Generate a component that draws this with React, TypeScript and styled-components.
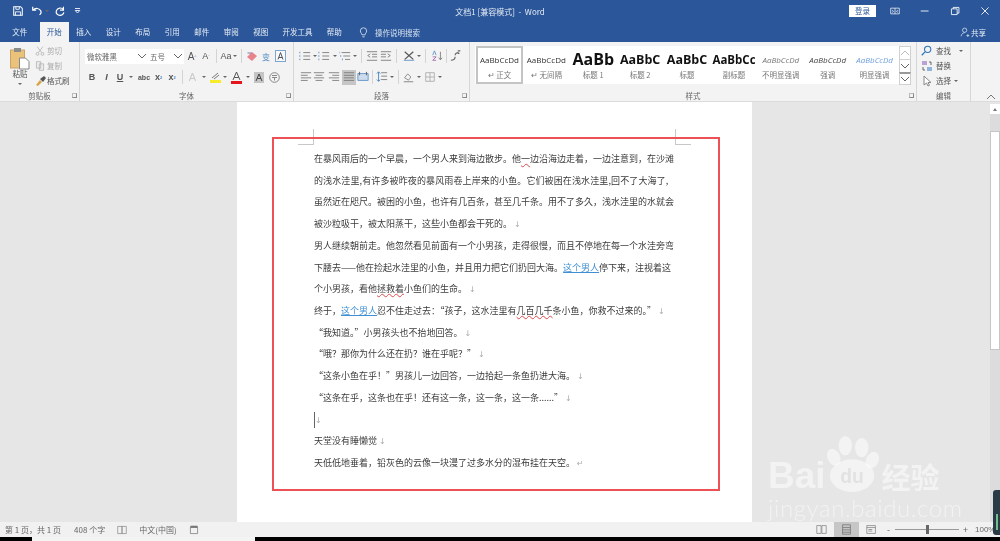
import React from "react";
import styled, { createGlobalStyle } from "styled-components";

const GlobalStyle = createGlobalStyle`
  html, body { margin: 0; padding: 0; background: #000; }
  * { box-sizing: border-box; }
`;

const CJK = `"Noto Sans CJK SC", "Noto Sans", sans-serif`;
const BLUE = "#2b579a";

const Window = styled.div`
  width: 1000px;
  height: 541px;
  overflow: hidden;
  display: flex;
  flex-direction: column;
  font-family: ${CJK};
  background: #f3f3f3;
  filter: blur(0.35px);
`;

const TitleBar = styled.div`
  height: 22px;
  background: ${BLUE};
  display: grid;
  grid-template-columns: 1fr auto 1fr;
  align-items: center;
  color: #fff;
`;

const QuickAccess = styled.div`
  display: flex;
  align-items: center;
  padding-left: 11px;
`;

const DocTitle = styled.div`
  font-size: 8px;
  color: #e3e9f3;
  white-space: pre;
`;

const WindowControls = styled.div`
  display: flex;
  align-items: center;
  justify-content: flex-end;
`;

const LoginButton = styled.div`
  width: 27px;
  height: 12px;
  margin-right: 4px;
  background: #fff;
  color: ${BLUE};
  font-size: 7.5px;
  line-height: 12px;
  text-align: center;
`;

const ControlCell = styled.div`
  width: 30px;
  display: flex;
  justify-content: center;
`;

const TabBar = styled.div`
  height: 20px;
  background: ${BLUE};
  display: flex;
  align-items: flex-end;
  padding-left: 5px;
`;

const Tab = styled.div<{ $active?: boolean; $gap?: number }>`
  height: 20px;
  min-width: 29.5px;
  padding: 0 7px;
  margin-right: ${(p) => p.$gap ?? 0}px;
  font-size: 7.5px;
  line-height: 19px;
  text-align: center;
  white-space: nowrap;
  background: ${(p) => (p.$active ? "#f3f3f3" : "transparent")};
  color: ${(p) => (p.$active ? BLUE : "#e6ebf4")};
`;

const SearchHint = styled.div`
  display: flex;
  align-items: center;
  gap: 6px;
  margin-left: 9px;
  height: 20px;
  font-size: 7.5px;
  color: #d7e0ee;
`;

const ShareLink = styled.div`
  margin-left: auto;
  margin-right: 14px;
  height: 20px;
  display: flex;
  align-items: center;
  gap: 1px;
  font-size: 7.5px;
  color: #e6ebf4;
`;

const Ribbon = styled.div`
  height: 60px;
  background: #f3f3f3;
  display: flex;
  border-bottom: 1px solid #dcdcdc;
`;

const Group = styled.div<{ $w: number }>`
  width: ${(p) => p.$w}px;
  height: 59px;
  display: flex;
  flex-direction: column;
  border-right: 1px solid #d6d6d6;
`;

const GroupBody = styled.div<{ $pad?: number }>`
  flex: 1 1 0;
  min-height: 0;
  display: flex;
  flex-direction: column;
  gap: 5px;
  padding: 6px 0 0 ${(p) => p.$pad ?? 5}px;
`;

const GroupFooter = styled.div`
  height: 11px;
  flex: none;
  display: grid;
  grid-template-columns: 1fr auto 1fr;
  align-items: center;
  font-size: 7.5px;
  line-height: 11px;
  color: #666;
`;

const Launcher = styled.div`
  justify-self: end;
  margin-right: 2px;
  width: 5px;
  height: 5px;
  border-right: 1px solid #888;
  border-bottom: 1px solid #888;
  border-left: 1px solid #bbb;
  border-top: 1px solid #bbb;
`;

const ToolRow = styled.div`
  display: flex;
  align-items: center;
  height: 16px;
`;

const Tool = styled.div<{ $w?: number; $on?: boolean }>`
  width: ${(p) => p.$w ?? 14}px;
  height: 15px;
  flex: none;
  display: flex;
  align-items: center;
  justify-content: center;
  font-size: 8px;
  color: #555;
  background: ${(p) => (p.$on ? "#c6c6c6" : "transparent")};
`;

const LetterTool = styled(Tool)<{ $b?: boolean; $i?: boolean; $u?: boolean; $size?: number; $color?: string }>`
  font-family: "Liberation Sans", sans-serif;
  font-size: ${(p) => p.$size ?? 9}px;
  font-weight: ${(p) => (p.$b ? 700 : 400)};
  font-style: ${(p) => (p.$i ? "italic" : "normal")};
  text-decoration: ${(p) => (p.$u ? "underline" : "none")};
  color: ${(p) => p.$color ?? "#555"};
`;

const Sub = styled.sub`
  font-size: 4px;
  color: #4a86c8;
`;

const Sup = styled.sup`
  font-size: 4px;
  color: #4a86c8;
`;

const Caret = styled.div<{ $w?: number }>`
  width: ${(p) => p.$w ?? 7}px;
  flex: none;
  display: flex;
  justify-content: center;
  &::before {
    content: "";
    border-left: 2px solid transparent;
    border-right: 2px solid transparent;
    border-top: 2px solid #666;
  }
`;

const Sep = styled.div<{ $m?: number }>`
  width: 1px;
  height: 14px;
  flex: none;
  margin: 0 ${(p) => p.$m ?? 3}px;
  background: #d4d4d4;
`;

const SelectBox = styled.div<{ $w: number }>`
  width: ${(p) => p.$w}px;
  height: 15px;
  flex: none;
  background: #fff;
  display: flex;
  align-items: center;
  justify-content: space-between;
  padding: 0 1px 0 2px;
  font-size: 7.5px;
  color: #666;
`;

const ClipboardBody = styled.div`
  flex: 1 1 0;
  min-height: 0;
  display: flex;
`;

const PasteButton = styled.div`
  width: 34px;
  display: flex;
  flex-direction: column;
  align-items: center;
  padding: 5px 0 0 6px;
  font-size: 7.5px;
  line-height: 8px;
  color: #555;
`;

const PasteCaret = styled(Caret)`
  margin-top: 5px;
`;

const SideList = styled.div`
  display: flex;
  flex-direction: column;
  padding-top: 1px;
`;

const SideItem = styled.div<{ $muted?: boolean }>`
  height: 15px;
  display: flex;
  align-items: center;
  gap: 1px;
  font-size: 7.5px;
  white-space: nowrap;
  color: ${(p) => (p.$muted ? "#aaa" : "#555")};
`;

const StylesBody = styled.div`
  flex: 1 1 0;
  min-height: 0;
  display: flex;
  padding: 4px 0 0 5px;
`;

const Gallery = styled.div`
  height: 38px;
  width: 424px;
  background: #fff;
  display: flex;
  padding-left: 1px;
`;

const StyleCard = styled.div<{ $on?: boolean }>`
  width: 46.9px;
  height: 38px;
  flex: none;
  overflow: hidden;
  display: flex;
  flex-direction: column;
  align-items: center;
  border: ${(p) => (p.$on ? "2px solid #c4c4c4" : "2px solid transparent")};
`;

const StylePreview = styled.div<{ $size?: number; $b?: boolean; $i?: boolean; $color?: string }>`
  height: 21px;
  line-height: 23px;
  width: 100%;
  overflow: hidden;
  text-align: center;
  white-space: nowrap;
  font-family: "Open Sans", sans-serif;
  font-size: ${(p) => p.$size ?? 8}px;
  font-weight: ${(p) => (p.$b ? 700 : 400)};
  font-style: ${(p) => (p.$i ? "italic" : "normal")};
  color: ${(p) => p.$color ?? "#333"};
`;

const StyleLabel = styled.div`
  font-size: 7.5px;
  line-height: 9px;
  margin-top: 1px;
  color: #777;
  white-space: nowrap;
`;

const GalleryScroll = styled.div`
  width: 12px;
  display: flex;
  flex-direction: column;
  background: #f3f3f3;
`;

const GalleryButton = styled.div`
  height: 13px;
  display: flex;
  align-items: center;
  justify-content: center;
  border: 1px solid #d0d0d0;
  border-bottom: none;
  background: #fff;
  &:last-child { border-bottom: 1px solid #d0d0d0; border-top: 2px solid #999; }
`;

const EditList = styled.div`
  flex: 1 1 0;
  min-height: 0;
  display: flex;
  flex-direction: column;
  padding: 1px 0 0 3px;
`;

const EditItem = styled.div`
  height: 15px;
  display: flex;
  align-items: center;
  gap: 3px;
  font-size: 7.5px;
  color: #555;
`;

const CollapseZone = styled.div`
  flex: 1;
  display: flex;
  justify-content: flex-end;
  align-items: flex-end;
  padding: 0 4px 1px 0;
`;

const Workspace = styled.div`
  position: relative;
  height: 420px;
  background: #e6e6e6;
  display: flex;
`;

const PageArea = styled.div`
  flex: 1;
  display: flex;
  justify-content: center;
  padding-right: 1px;
`;

const Page = styled.div`
  position: relative;
  width: 515px;
  height: 420px;
  background: #fff;
  padding: 46px 0 0 77px;
  font-size: 9px;
  color: #3a3a3a;
`;

const Crop = styled.div<{ $side: "left" | "right" }>`
  position: absolute;
  top: 27px;
  width: 16px;
  height: 16px;
  border-bottom: 1px solid #c8c8c8;
  ${(p) => (p.$side === "left" ? "left: 61px; border-right: 1px solid #c8c8c8;" : "left: 438px; border-left: 1px solid #c8c8c8;")}
`;

const RedFrame = styled.div`
  position: absolute;
  left: 35px;
  top: 35px;
  width: 448px;
  height: 354px;
  border: 2px solid #ec5155;
  pointer-events: none;
`;

const Line = styled.div<{ $spread?: number }>`
  height: 21.72px;
  line-height: 21.72px;
  white-space: pre;
  letter-spacing: ${(p) => p.$spread ?? 0}px;
`;

const LinkText = styled.span`
  color: #3f8fd2;
  text-decoration: underline;
  text-decoration-thickness: 1px;
`;

const Squiggle = styled.span`
  text-decoration: underline wavy #e0494e;
  text-decoration-thickness: 1px;
`;

const Mark = styled.span`
  color: #aaa;
  font-family: "DejaVu Sans", sans-serif;
  font-size: 8px;
  margin-left: 2px;
`;

const TextCursor = styled.span`
  display: inline-block;
  width: 1px;
  height: 16px;
  margin-right: -2px;
  vertical-align: middle;
  background: #666;
`;

const Scrollbar = styled.div`
  width: 10px;
  margin-top: 2px;
  background: #dcdcdc;
  display: flex;
  flex-direction: column;
`;

const ScrollArrow = styled.div`
  height: 10px;
  background: #fff;
  display: flex;
  align-items: center;
  justify-content: center;
  &::before {
    content: "";
    border-left: 2.5px solid transparent;
    border-right: 2.5px solid transparent;
    border-bottom: 3px solid #777;
  }
`;

const ScrollThumb = styled.div`
  height: 219px;
  margin-top: 17px;
  background: #fff;
  border: 1px solid #c6c6c6;
`;

const Watermark = styled.div`
  position: absolute;
  left: 768px;
  top: 330px;
  width: 185px;
  color: rgba(255, 255, 255, 0.5);
  pointer-events: none;
`;

const WatermarkLogo = styled.div`
  display: flex;
  align-items: flex-end;
  height: 62px;
`;

const WatermarkBai = styled.div`
  font-family: "Liberation Sans", sans-serif;
  font-size: 37px;
  font-weight: 700;
  line-height: 36px;
`;

const WatermarkCn = styled.div`
  font-size: 29px;
  font-weight: 700;
  line-height: 36px;
  white-space: nowrap;
`;

const WatermarkUrl = styled.div`
  font-family: "Lato", sans-serif;
  font-weight: 300;
  font-size: 24px;
  line-height: 28px;
  letter-spacing: 0.6px;
  white-space: nowrap;
`;

const Widget = styled.div`
  position: absolute;
  right: 0;
  top: 388px;
  width: 7px;
  height: 45px;
  border-radius: 3px 0 0 3px;
  background: #2a3b46;
  display: flex;
  justify-content: flex-end;
  align-items: flex-end;
  &::after {
    content: "";
    width: 2px;
    height: 16px;
    margin: 0 2px 5px 0;
    background: #6fbf8f;
  }
`;

const StatusBar = styled.div`
  height: 15px;
  background: #f1f1f1;
  display: flex;
  align-items: center;
  font-size: 8px;
  color: #666;
  white-space: pre;
`;

const StatusText = styled.div<{ $m: number }>`
  margin-left: ${(p) => p.$m}px;
`;

const StatusView = styled.div<{ $on?: boolean; $w: number }>`
  width: ${(p) => p.$w}px;
  height: 15px;
  display: flex;
  align-items: center;
  justify-content: center;
  background: ${(p) => (p.$on ? "#c6c6c6" : "transparent")};
`;

const StatusRight = styled.div`
  margin-left: auto;
  display: flex;
  align-items: center;
  height: 15px;
`;

const ZoomSlider = styled.div`
  position: relative;
  width: 64px;
  height: 1px;
  background: #999;
  margin: 0 2px;
  &::after {
    content: "";
    position: absolute;
    left: 31px;
    top: -4px;
    width: 3px;
    height: 9px;
    background: #666;
  }
`;

const ZoomMark = styled.div`
  width: 9px;
  text-align: center;
  font-size: 9px;
  color: #666;
`;

const ZoomValue = styled.div`
  width: 25px;
  margin-left: 5px;
  font-family: "Liberation Sans", sans-serif;
  font-size: 8px;
`;

const Taskbar = styled.div`
  height: 4px;
  background: #000;
  padding-left: 32px;
  &::before {
    content: "";
    display: block;
    width: 223px;
    height: 4px;
    background: #f4f4f4;
  }
`;

type GlyphProps = { size?: number; children: React.ReactNode };

const Glyph = ({ size = 12, children }: GlyphProps): JSX.Element => (
  <svg width={size} height={size} viewBox="0 0 14 14" fill="none" stroke="#666" strokeWidth="1">
    {children}
  </svg>
);

const ListLines = ({ marks, c = "#5b8fc7" }: { marks: string; c?: string }): JSX.Element => (
  <Glyph>
    <path d="M5 3h8M5 7h8M5 11h8" stroke="#777" />
    <path d={marks} stroke={c} />
  </Glyph>
);

const AlignLines = ({ d }: { d: string }): JSX.Element => (
  <Glyph>
    <path d={d} stroke="#777" />
  </Glyph>
);

const SmallChevron = ({ up, c = "#666" }: { up?: boolean; c?: string }): JSX.Element => (
  <svg width="10" height="6" viewBox="0 0 10 6" fill="none" stroke={c}>
    <path d={up ? "M1 5l4-4 4 4" : "M1 1l4 4 4-4"} />
  </svg>
);

const white = { stroke: "#fff" };

const App: React.FC = (): JSX.Element => {
  const tabs = ["插入", "设计", "布局", "引用", "邮件", "审阅", "视图", "开发工具", "帮助"];

  return (
    <Window>
      <GlobalStyle />
      <TitleBar>
        <QuickAccess>
          <Tool>
            <Glyph>
              <path d="M2 2h8l2 2v8H2z" {...white} strokeWidth="1.2" />
              <path d="M4.5 2v3h4V2M4 12V8h6v4" {...white} />
            </Glyph>
          </Tool>
          <Tool $w={5} />
          <Tool>
            <Glyph>
              <path d="M2 2v4h4M2.5 6C5 3 10 3.5 11.5 7c.7 1.800-.2 3.500-1.500 4.500" {...white} strokeWidth="1.4" />
            </Glyph>
          </Tool>
          <Caret $w={6} />
          <Tool $w={3} />
          <Tool>
            <Glyph>
              <path d="M11 2v4H7M11 5.500C9 2.500 4 3 2.800 6.500S4.500 12 7 12s4-1.500 4.500-3.500" {...white} strokeWidth="1.400" />
            </Glyph>
          </Tool>
          <Tool $w={6} />
          <Tool $w={9}>
            <svg width="7" height="6" viewBox="0 0 7 6" fill="none" stroke="#dfe6f1">
              <path d="M1 .5h5M1.200 2.500L3.500 5l2.300-2.500z" />
            </svg>
          </Tool>
        </QuickAccess>
        <DocTitle>文档1 [兼容模式]  -  Word</DocTitle>
        <WindowControls>
          <LoginButton>登录</LoginButton>
          <ControlCell>
            <Glyph size={10}>
              <path d="M1 3h12v8H1zM7 3v8" {...white} />
              <path d="M3 6l2 1.500L3 9M11 6L9 7.500 11 9" {...white} />
            </Glyph>
          </ControlCell>
          <ControlCell>
            <Glyph size={10}>
              <path d="M1 7h11" {...white} strokeWidth="1.200" />
            </Glyph>
          </ControlCell>
          <ControlCell>
            <Glyph size={10}>
              <path d="M2 4h8v8H2zM4.500 4V2h8v8H10" {...white} strokeWidth="1.200" />
            </Glyph>
          </ControlCell>
          <ControlCell>
            <Glyph size={10}>
              <path d="M2 2l10 10M12 2L2 12" {...white} strokeWidth="1.200" />
            </Glyph>
          </ControlCell>
        </WindowControls>
      </TitleBar>

      <TabBar>
        <Tab $gap={5}>文件</Tab>
        <Tab $active>开始</Tab>
        {tabs.map((t) => (
          <Tab key={t}>{t}</Tab>
        ))}
        <SearchHint>
          <Glyph size={11}>
            <path d="M5 10c0-2-2-2.500-2-5a4 4 0 0 1 8 0c0 2.500-2 3-2 5zM5.500 12.500h3" stroke="#e6ebf4" />
          </Glyph>
          操作说明搜索
        </SearchHint>
        <ShareLink>
          <Glyph size={10}>
            <circle cx="6.500" cy="4.500" r="3" stroke="#e6ebf4" />
            <path d="M1.500 13c.5-3 2.500-5 5-5M9 12h4M11 10v4" stroke="#e6ebf4" />
          </Glyph>
          共享
        </ShareLink>
      </TabBar>

      <Ribbon>
        <Group $w={80}>
          <ClipboardBody>
            <PasteButton>
              <svg width="20" height="23" viewBox="0 0 20 23">
                <rect x="0.500" y="3" width="14" height="18" fill="#eac27a" stroke="#c9a468" />
                <rect x="4" y="1" width="7" height="4" fill="#8c8c8c" />
                <path d="M9.500 11h6l3.500 3.500V22H9.500z" fill="#fff" stroke="#888" />
              </svg>
              粘贴
              <PasteCaret />
            </PasteButton>
            <SideList>
              <SideItem $muted>
                <Tool $w={12}>
                  <Glyph size={10}>
                    <path d="M3 1l6 8M11 1L5 9" stroke="#aaa" />
                    <circle cx="3.500" cy="11" r="2" stroke="#aaa" />
                    <circle cx="10.500" cy="11" r="2" stroke="#aaa" />
                  </Glyph>
                </Tool>
                剪切
              </SideItem>
              <SideItem $muted>
                <Tool $w={12}>
                  <Glyph size={10}>
                    <path d="M2 1h6v9H2zM6 4h6v9H6z" stroke="#aaa" fill="#eee" />
                  </Glyph>
                </Tool>
                复制
              </SideItem>
              <SideItem>
                <Tool $w={12}>
                  <svg width="11" height="10" viewBox="0 0 11 10">
                    <path d="M1 9l4-5 2 2-4 4z" fill="#d8a545" />
                    <path d="M5 3l4-3 2 2-3 4z" fill="#555" />
                  </svg>
                </Tool>
                格式刷
              </SideItem>
            </SideList>
          </ClipboardBody>
          <GroupFooter>
            <span />
            <span>剪贴板</span>
            <Launcher />
          </GroupFooter>
        </Group>

        <Group $w={214}>
          <GroupBody>
            <ToolRow>
              <SelectBox $w={63}>
                微软雅黑
                <SmallChevron />
              </SelectBox>
              <SelectBox $w={36}>
                五号
                <SmallChevron />
              </SelectBox>
              <Tool $w={1} />
              <LetterTool $size={10}>
                A<Sup>^</Sup>
              </LetterTool>
              <LetterTool $size={9}>
                A<Sup>ˇ</Sup>
              </LetterTool>
              <Sep />
              <LetterTool $w={12} $size={9}>
                Aa
              </LetterTool>
              <Caret $w={6} />
              <Sep />
              <Tool>
                <svg width="12" height="12" viewBox="0 0 12 12">
                  <path d="M1 7l5-5 5 4-5 5z" fill="#e8838c" />
                  <path d="M1.500 3h4" stroke="#7d7db0" />
                </svg>
              </Tool>
              <Tool>
                <span style={{ color: "#5b8fc7" }}>变</span>
              </Tool>
              <LetterTool $size={9}>
                <svg width="11" height="12" viewBox="0 0 11 12" fill="none">
                  <rect x="0.500" y="0.500" width="10" height="11" stroke="#7da4cf" fill="#f7f9fc" />
                  <path d="M3 9.500l2.500-7 2.500 7M3.800 7.500h3.400" stroke="#555" />
                </svg>
              </LetterTool>
            </ToolRow>
            <ToolRow>
              <LetterTool $b>B</LetterTool>
              <LetterTool $i $b $w={15}>
                I
              </LetterTool>
              <LetterTool $u $b $w={12}>
                U
              </LetterTool>
              <Caret $w={10} />
              <LetterTool $w={16} $size={7} $b>
                abc
              </LetterTool>
              <LetterTool $w={13} $b>
                x<Sub>2</Sub>
              </LetterTool>
              <LetterTool $b>
                x<Sup>2</Sup>
              </LetterTool>
              <Sep />
              <LetterTool $w={13} $size={11} $color="#c9c9c9">
                A
              </LetterTool>
              <Caret $w={9} />
              <Tool>
                <svg width="11" height="12" viewBox="0 0 11 12">
                  <path d="M2 7l6-5M4 8l5-4" stroke="#777" fill="none" />
                  <rect y="9" width="11" height="3" fill="#f6ec2a" />
                </svg>
              </Tool>
              <Caret $w={6} />
              <LetterTool $w={17} $size={10}>
                <svg width="11" height="13" viewBox="0 0 11 13" fill="none">
                  <path d="M2 9l3.500-8L9 9M3.300 6.500h4.400" stroke="#555" />
                  <rect y="10" width="11" height="3" fill="#e8141c" />
                </svg>
              </LetterTool>
              <Caret $w={6} />
              <LetterTool $w={16} $size={9} $b>
                <svg width="10" height="11" viewBox="0 0 10 11">
                  <rect width="10" height="11" fill="#c4c4c4" />
                  <path d="M2 9l3-7 3 7M3.200 6.500h3.600" stroke="#444" fill="none" />
                </svg>
              </LetterTool>
              <Tool>
                <svg width="11" height="11" viewBox="0 0 11 11" fill="none" stroke="#888">
                  <circle cx="5.500" cy="5.500" r="4.800" />
                  <path d="M3 3.500h5M3 5.500h5M5.500 5.500v3" />
                </svg>
              </Tool>
            </ToolRow>
          </GroupBody>
          <GroupFooter>
            <span />
            <span>字体</span>
            <Launcher />
          </GroupFooter>
        </Group>

        <Group $w={176}>
          <GroupBody>
            <ToolRow>
              <ListLines marks="M1 2v2M1 6v2M1 10v2" />
              <Caret />
              <ListLines marks="M1 2v2M1 6v2M1 10v2" />
              <Caret $w={9} />
              <Glyph>
                <path d="M3 3h10M5 7h8M7 11h6" stroke="#777" />
                <path d="M0 2v2M2 6v2M4 10v2" stroke="#5b8fc7" />
              </Glyph>
              <Caret $w={7} />
              <Sep $m={3} />
              <Tool $w={14}>
                <AlignLines d="M1 2h12M7 5h6M7 8h6M1 12h12M5 4.500L2 6.500 5 8.500" />
              </Tool>
              <Tool $w={13}>
                <AlignLines d="M1 2h12M1 5h6M1 8h6M1 12h12M9 4.500l3 2-3 2" />
              </Tool>
              <Sep $m={4} />
              <Tool $w={15}>
                <Glyph>
                  <path d="M2 2l10 9M12 2L2 11" stroke="#555" strokeWidth="1.400" />
                  <path d="M1 12h12" stroke="#5b8fc7" />
                </Glyph>
              </Tool>
              <Caret $w={6} />
              <Sep $m={3} />
              <Tool $w={15}>
                <Glyph>
                  <path d="M11 2v9M9 9l2 2.500L13 9" stroke="#777" />
                  <path d="M2 6l2-5 2 5" stroke="#5b8fc7" />
                  <path d="M2 8h4l-4 4h4" stroke="#a064a8" />
                </Glyph>
              </Tool>
              <Sep $m={2} />
              <Tool $w={14}>
                <Glyph>
                  <path d="M1 12c3 0 5-1 5-4M10 3c-2 0-4 1-4 3M9 1h3M9 4h2" stroke="#666" strokeWidth="1.300" />
                </Glyph>
              </Tool>
            </ToolRow>
            <ToolRow>
              <Tool $w={13}>
                <AlignLines d="M1 2h12M1 5h8M1 8h12M1 11h8" />
              </Tool>
              <Tool $w={14}>
                <AlignLines d="M1 2h12M3 5h8M1 8h12M3 11h8" />
              </Tool>
              <Tool $w={16}>
                <AlignLines d="M1 2h12M5 5h8M1 8h12M5 11h8" />
              </Tool>
              <Tool $on>
                <AlignLines d="M1 2h12M1 5h12M1 8h12M1 11h12" />
              </Tool>
              <Tool>
                <Glyph>
                  <path d="M1 3h12v8H1z" stroke="#5b8fc7" fill="#cddcec" />
                  <path d="M3 1v4M11 1v4" stroke="#555" />
                </Glyph>
              </Tool>
              <Sep $m={2} />
              <Tool>
                <Glyph>
                  <path d="M6 2h7M6 6h7M6 10h7" stroke="#777" />
                  <path d="M3 1v11M1 3l2-2 2 2M1 10l2 2 2-2" stroke="#3a7bc0" />
                </Glyph>
              </Tool>
              <Caret $w={5} />
              <Sep $m={4} />
              <Tool $w={11}>
                <Glyph>
                  <path d="M2 8l4-5 4 4-3 4z" stroke="#777" />
                  <path d="M1 13h12" stroke="#999" strokeWidth="1.500" />
                </Glyph>
              </Tool>
              <Caret $w={9} />
              <Tool $w={13}>
                <Glyph>
                  <path d="M2 2h10v10H2zM7 2v10M2 7h10" stroke="#aaa" />
                </Glyph>
              </Tool>
              <Caret $w={8} />
            </ToolRow>
          </GroupBody>
          <GroupFooter>
            <span />
            <span>段落</span>
            <Launcher />
          </GroupFooter>
        </Group>

        <Group $w={447}>
          <StylesBody>
            <Gallery>
              <StyleCard $on>
                <StylePreview>AaBbCcDd</StylePreview>
                <StyleLabel>↵ 正文</StyleLabel>
              </StyleCard>
              <StyleCard>
                <StylePreview>AaBbCcDd</StylePreview>
                <StyleLabel>↵ 无间隔</StyleLabel>
              </StyleCard>
              <StyleCard>
                <StylePreview $size={16} $b $color="#111">
                  AaBb
                </StylePreview>
                <StyleLabel>标题 1</StyleLabel>
              </StyleCard>
              <StyleCard>
                <StylePreview $size={12.500} $b $color="#111">
                  AaBbC
                </StylePreview>
                <StyleLabel>标题 2</StyleLabel>
              </StyleCard>
              <StyleCard>
                <StylePreview $size={12.500} $b $color="#111">
                  AaBbC
                </StylePreview>
                <StyleLabel>标题</StyleLabel>
              </StyleCard>
              <StyleCard>
                <StylePreview $size={11.500} $b $color="#111">
                  AaBbCc
                </StylePreview>
                <StyleLabel>副标题</StyleLabel>
              </StyleCard>
              <StyleCard>
                <StylePreview $i $color="#777">
                  AaBbCcDd
                </StylePreview>
                <StyleLabel>不明显强调</StyleLabel>
              </StyleCard>
              <StyleCard>
                <StylePreview $i $color="#444">
                  AaBbCcDd
                </StylePreview>
                <StyleLabel>强调</StyleLabel>
              </StyleCard>
              <StyleCard>
                <StylePreview $i $color="#6d9edb">
                  AaBbCcDd
                </StylePreview>
                <StyleLabel>明显强调</StyleLabel>
              </StyleCard>
            </Gallery>
            <GalleryScroll>
              <GalleryButton>
                <SmallChevron up c="#bbb" />
              </GalleryButton>
              <GalleryButton>
                <SmallChevron />
              </GalleryButton>
              <GalleryButton>
                <SmallChevron />
              </GalleryButton>
            </GalleryScroll>
          </StylesBody>
          <GroupFooter>
            <span />
            <span>样式</span>
            <Launcher />
          </GroupFooter>
        </Group>

        <Group $w={54}>
          <EditList>
            <EditItem>
              <Tool $w={13}>
                <Glyph size={11}>
                  <circle cx="8.500" cy="5.500" r="4" stroke="#2f75bb" strokeWidth="1.400" />
                  <path d="M5.500 8.500L1 13" stroke="#2f75bb" strokeWidth="1.600" />
                </Glyph>
              </Tool>
              查找
              <Caret $w={14} />
            </EditItem>
            <EditItem>
              <Tool $w={13}>
                <svg width="12" height="12" viewBox="0 0 12 12" fill="none">
                  <path d="M1 1h5v4H1z" fill="#b9a3d4" />
                  <path d="M6 7h5v4H6z" fill="#8fb4dd" />
                  <path d="M2 7v3h2M10 5V2H8" stroke="#666" />
                </svg>
              </Tool>
              替换
            </EditItem>
            <EditItem>
              <Tool $w={13}>
                <svg width="10" height="12" viewBox="0 0 10 12" fill="#fff" stroke="#888">
                  <path d="M2 1v9l2.500-2 1.500 3 1.500-.7L6 7.500h3z" />
                </svg>
              </Tool>
              选择
              <Caret $w={4} />
            </EditItem>
          </EditList>
          <GroupFooter>
            <span />
            <span>编辑</span>
            <span />
          </GroupFooter>
        </Group>

        <CollapseZone>
          <SmallChevron up c="#777" />
        </CollapseZone>
      </Ribbon>

      <Workspace>
        <PageArea>
          <Page>
            <Crop $side="left" />
            <Crop $side="right" />
            <Line>
              在暴风雨后的一个早晨，一个男人来到海边散步。他<Squiggle>一</Squiggle>边沿海边走着，一边注意到，在沙滩
            </Line>
            <Line $spread={0.12}>的浅水洼里,有许多被昨夜的暴风雨卷上岸来的小鱼。它们被困在浅水洼里,回不了大海了,</Line>
            <Line>虽然近在咫尺。被困的小鱼，也许有几百条，甚至几千条。用不了多久，浅水洼里的水就会</Line>
            <Line>
              被沙粒吸干，被太阳蒸干，这些小鱼都会干死的。<Mark>↓</Mark>
            </Line>
            <Line>男人继续朝前走。他忽然看见前面有一个小男孩，走得很慢，而且不停地在每一个水洼旁弯</Line>
            <Line>
              下腰去——他在捡起水洼里的小鱼，并且用力把它们扔回大海。<LinkText>这个男人</LinkText>停下来，注视着这
            </Line>
            <Line>
              个小男孩，看他<Squiggle>拯救着</Squiggle>小鱼们的生命。<Mark>↓</Mark>
            </Line>
            <Line>
              终于，<LinkText>这个男人</LinkText>忍不住走过去：“孩子，这水洼里有<Squiggle>几百几千</Squiggle>条小鱼，你救不过来的。”
              <Mark>↓</Mark>
            </Line>
            <Line>
              “我知道。”小男孩头也不抬地回答。<Mark>↓</Mark>
            </Line>
            <Line>
              “哦？那你为什么还在扔？谁在乎呢？”<Mark>↓</Mark>
            </Line>
            <Line>
              “这条小鱼在乎！”男孩儿一边回答，一边拾起一条鱼扔进大海。<Mark>↓</Mark>
            </Line>
            <Line>
              “这条在乎，这条也在乎！还有这一条，这一条，这一条......”<Mark>↓</Mark>
            </Line>
            <Line>
              <TextCursor />
              <Mark>↓</Mark>
            </Line>
            <Line>
              天堂没有睡懒觉<Mark>↓</Mark>
            </Line>
            <Line>
              天低低地垂着，铅灰色的云像一块漫了过多水分的湿布挂在天空。<Mark>↵</Mark>
            </Line>
            <RedFrame />
          </Page>
        </PageArea>
        <Scrollbar>
          <ScrollArrow />
          <ScrollThumb />
        </Scrollbar>
        <Watermark>
          <WatermarkLogo>
            <WatermarkBai>Bai</WatermarkBai>
            <svg width="56" height="62" viewBox="0 0 58 62" fill="rgba(255,255,255,0.5)">
              <ellipse cx="20" cy="13" rx="7" ry="10" />
              <ellipse cx="37" cy="15" rx="7" ry="10" />
              <ellipse cx="8" cy="25" rx="6.500" ry="9" transform="rotate(-25 8 25)" />
              <ellipse cx="48" cy="28" rx="6.500" ry="9" transform="rotate(25 48 28)" />
              <ellipse cx="27" cy="44" rx="23" ry="17" />
              <text x="27" y="52" textAnchor="middle" fontFamily="Liberation Sans" fontSize="20" fontWeight="700" fill="#e2e2e2">
                du
              </text>
            </svg>
            <WatermarkCn>经验</WatermarkCn>
          </WatermarkLogo>
          <WatermarkUrl>jingyan.baidu.com</WatermarkUrl>
        </Watermark>
        <Widget />
      </Workspace>

      <StatusBar>
        <StatusText $m={5}>第 1 页，共 1 页</StatusText>
        <StatusText $m={13}>408 个字</StatusText>
        <StatusView $w={34}>
          <Glyph size={10}>
            <path d="M1 2h6v10H1zM7 2h6v10H7z" stroke="#888" />
          </Glyph>
        </StatusView>
        <StatusText $m={0}>中文(中国)</StatusText>
        <StatusView $w={34}>
          <Glyph size={10}>
            <path d="M2 3h10v9H2z" stroke="#777" />
            <path d="M2 1h10v3H2z" fill="#777" stroke="none" />
          </Glyph>
        </StatusView>
        <StatusRight>
          <StatusView $w={25}>
            <Glyph size={11}>
              <path d="M1 2h5.500v10H1zM7.500 2H13v10H7.500z" stroke="#888" />
            </Glyph>
          </StatusView>
          <StatusView $w={25} $on>
            <Glyph size={11}>
              <path d="M2 1h10v12H2zM2 4.500h10M2 7.500h10M2 10.500h10" stroke="#777" />
            </Glyph>
          </StatusView>
          <StatusView $w={25}>
            <Glyph size={11}>
              <path d="M1 2h11v10H1zM1 4.500h11M3 7h5M3 9h5" stroke="#888" />
            </Glyph>
          </StatusView>
          <ZoomMark>-</ZoomMark>
          <ZoomSlider />
          <ZoomMark>+</ZoomMark>
          <ZoomValue>100%</ZoomValue>
        </StatusRight>
      </StatusBar>
      <Taskbar />
    </Window>
  );
};

export default App;
